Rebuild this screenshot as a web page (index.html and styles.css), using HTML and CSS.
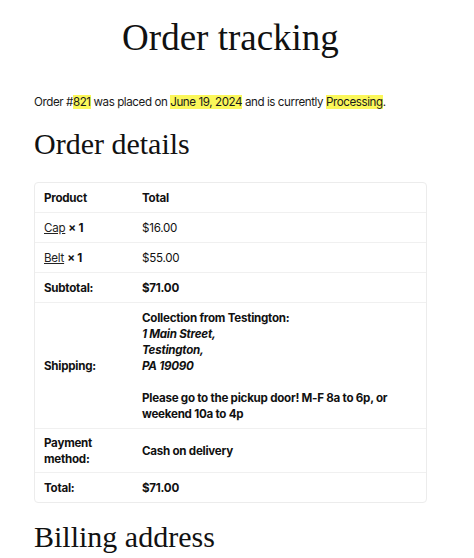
FILE: index.html
```html
<!DOCTYPE html>
<html lang="en">
<head>
  <meta charset="UTF-8">
  <meta name="viewport" content="width=device-width, initial-scale=1.0">
  <title>Order tracking</title>
  <link rel="stylesheet" href="styles.css">
</head>
<body>
  <main class="page">
    <h1 class="page-title">Order tracking</h1>
    <p class="order-status">Order #<mark>821</mark> was placed on <mark>June 19, 2024</mark> and is currently <mark>Processing</mark>.</p>

    <h2 class="section-title">Order details</h2>
    <table class="order-table">
      <thead>
        <tr>
          <th class="col-label">Product</th>
          <th>Total</th>
        </tr>
      </thead>
      <tbody>
        <tr>
          <td><a href="#">Cap</a> <strong>&times;&nbsp;1</strong></td>
          <td>$16.00</td>
        </tr>
        <tr>
          <td><a href="#">Belt</a> <strong>&times;&nbsp;1</strong></td>
          <td>$55.00</td>
        </tr>
      </tbody>
      <tfoot>
        <tr>
          <th>Subtotal:</th>
          <td>$71.00</td>
        </tr>
        <tr>
          <th>Shipping:</th>
          <td>
            Collection from Testington:<br>
            <em>1 Main Street,<br>Testington,<br>PA 19090</em><br><br>
            Please go to the pickup door! M-F 8a to 6p, or weekend 10a to 4p
          </td>
        </tr>
        <tr class="row-tight">
          <th>Payment method:</th>
          <td>Cash on delivery</td>
        </tr>
        <tr>
          <th>Total:</th>
          <td>$71.00</td>
        </tr>
      </tfoot>
    </table>

    <h2 class="section-title">Billing address</h2>
  </main>
</body>
</html>
```

FILE: styles.css
```css
body {
  margin: 0;
  padding: 0;
  background: #fff;
  color: #111;
  font-family: Inter, 'Noto Sans', sans-serif;
}
.page {
  padding: 0 47px 0 34px;
}
.page-title {
  margin: 16px 0 0;
  font-family: 'Liberation Serif', serif;
  font-weight: 400;
  font-size: 37px;
  line-height: 44px;
  text-align: center;
}
.order-status {
  margin: 33px 0 0;
  font-size: 11.6px;
  line-height: 18px;
  letter-spacing: -0.42px;
  color: #1a1a1a;
}
.order-status mark {
  background: #fbf75a;
  color: inherit;
}
.section-title {
  margin: 15px 0 0;
  font-family: 'Liberation Serif', serif;
  font-weight: 400;
  font-size: 30px;
  line-height: 36px;
}
.order-table {
  width: 100%;
  margin-top: 20px;
  border: 1px solid #ececec;
  border-radius: 4px;
  border-spacing: 0;
  font-size: 11.6px;
  line-height: 16px;
  letter-spacing: -0.25px;
}
.order-table th,
.order-table td {
  padding: 7px 9px 6px;
  text-align: left;
  vertical-align: middle;
  border-top: 1px solid #f0f0f0;
}
.order-table thead th {
  border-top: none;
}
.order-table th {
  font-weight: 700;
}
.order-table .col-label {
  width: 80px;
}
.order-table tfoot td {
  font-weight: 700;
}
.order-table .row-tight th,
.order-table .row-tight td {
  padding: 6px 9px 5px;
}
.order-table a {
  color: #222;
  text-decoration: underline;
}
.order-table em {
  font-style: italic;
}
.order-table + .section-title {
  margin-top: 16px;
}
```
